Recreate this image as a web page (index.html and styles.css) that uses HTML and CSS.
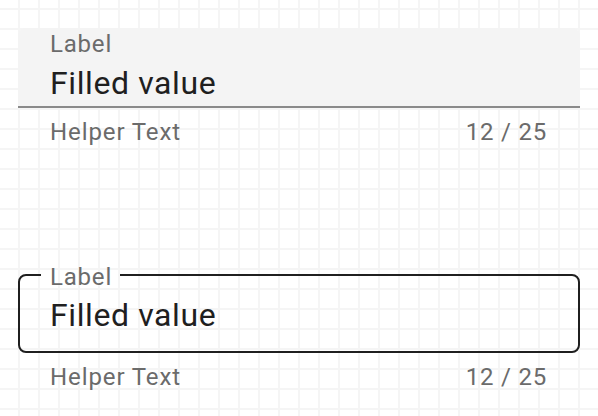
FILE: index.html
```html
<!DOCTYPE html>
<html lang="en">
<head>
  <meta charset="UTF-8" />
  <title>Text fields</title>
  <link rel="stylesheet" href="styles.css">
</head>
<body>
  <div class="container">
    <div class="field">
      <div class="filled">
        <label class="label" for="filledInput">Label</label>
        <input id="filledInput" class="value" type="text" value="Filled value" readonly />
      </div>
      <div class="helper">
        <span>Helper Text</span>
        <span class="counter">12 / 25</span>
      </div>
    </div>

    <div class="field field-outlined">
      <fieldset class="outlined">
        <legend>Label</legend>
        <input class="value" type="text" value="Filled value" readonly />
      </fieldset>
      <div class="helper">
        <span>Helper Text</span>
        <span class="counter">12 / 25</span>
      </div>
    </div>
  </div>
</body>
</html>
```

FILE: styles.css
```css
html {
  background-color: #ffffff;
  background-image:
    linear-gradient(#f5f5f5 2px, transparent 2px),
    linear-gradient(90deg, #f5f5f5 2px, transparent 2px);
  background-size: 20px 20px;
  background-position: 18px 8px;
}

body {
  margin: 0;
  padding: 0;
  font-family: Roboto, "Liberation Sans", sans-serif;
}

.container {
  width: 562px;
  padding: 28px 18px;
}

.filled {
  background: #f4f4f4;
  border-bottom: 2px solid #8a8a8a;
  border-radius: 8px 8px 0 0;
  padding: 4px 31px 3px 32px;
}

.label {
  display: block;
  font-size: 24px;
  line-height: 24px;
  letter-spacing: 0.8px;
  color: #6b6b6b;
}

.value {
  display: block;
  width: 100%;
  margin: 0;
  padding: 0;
  border: none;
  outline: none;
  background: transparent;
  font-family: inherit;
  font-size: 32px;
  line-height: 40px;
  height: 40px;
  letter-spacing: 0.6px;
  color: #1f1f1f;
}

.filled .value {
  margin-top: 7px;
}

.helper {
  display: flex;
  justify-content: space-between;
  margin-top: 12px;
  padding: 0 33px 0 32px;
  font-size: 24px;
  line-height: 24px;
  letter-spacing: 0.9px;
  color: #6b6b6b;
}

.counter {
  letter-spacing: 0.8px;
}

.field-outlined {
  margin-top: 117px;
}

.outlined {
  margin: 0;
  min-width: 0;
  border: 2px solid #1f1f1f;
  border-radius: 8px;
  padding: 6px 29px 16px 30px;
}

.outlined legend {
  margin-left: -9px;
  padding: 4px 8px 0 9px;
  font-size: 24px;
  line-height: 24px;
  letter-spacing: 0.8px;
  color: #6b6b6b;
}
```
